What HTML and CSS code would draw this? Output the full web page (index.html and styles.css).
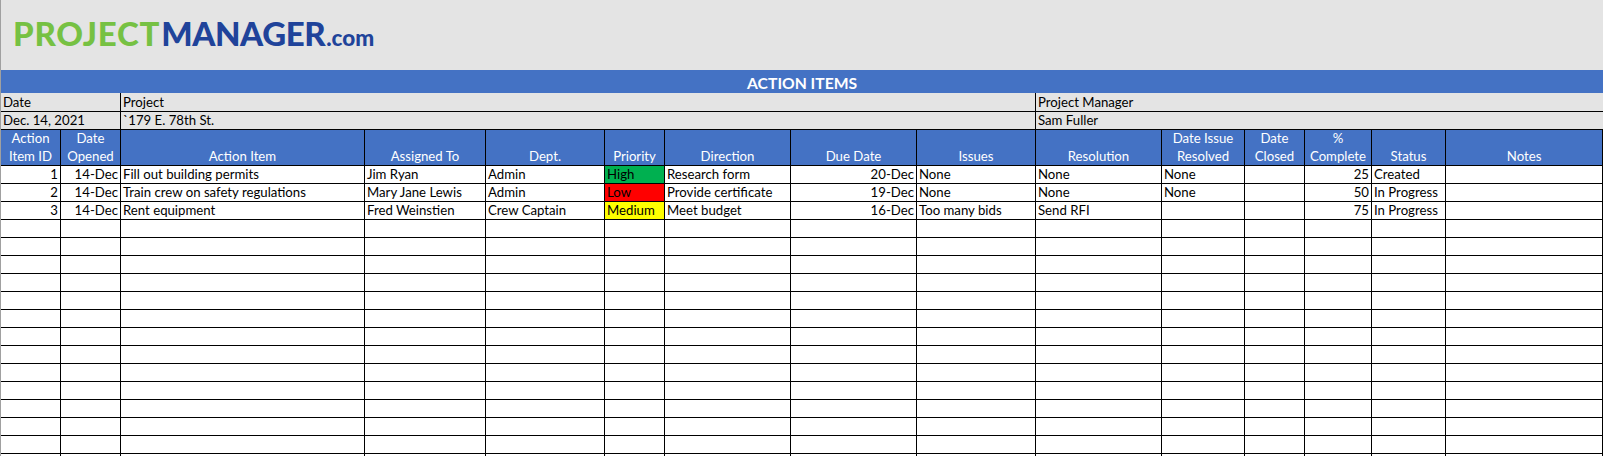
FILE: index.html
```html
<!DOCTYPE html>
<html lang="en">
<head>
<meta charset="utf-8">
<title>Action Items</title>
<link rel="stylesheet" href="styles.css">
</head>
<body>
<div class="sheet">
  <div class="banner">
    <div class="logo"><span class="logo-green">PROJECT</span><span class="logo-blue">MANAGER</span><span class="logo-com">.com</span></div>
  </div>
  <table class="grid">
    <colgroup>
      <col class="c1"><col class="c2"><col class="c3"><col class="c4"><col class="c5"><col class="c6"><col class="c7"><col class="c8"><col class="c9"><col class="c10"><col class="c11"><col class="c12"><col class="c13"><col class="c14"><col class="c15">
    </colgroup>
    <tbody>
      <tr class="title-row"><td colspan="15">ACTION ITEMS</td></tr>
      <tr class="meta first"><td colspan="2">Date</td><td colspan="7">Project</td><td colspan="6" class="open">Project Manager</td></tr>
      <tr class="meta"><td colspan="2">Dec. 14, 2021</td><td colspan="7">`179 E. 78th St.</td><td colspan="6" class="open">Sam Fuller</td></tr>
      <tr class="head">
        <th>Action<br>Item ID</th><th>Date<br>Opened</th><th>Action Item</th><th>Assigned To</th><th>Dept.</th><th>Priority</th><th>Direction</th><th>Due Date</th><th>Issues</th><th>Resolution</th><th>Date Issue<br>Resolved</th><th>Date<br>Closed</th><th>%<br>Complete</th><th>Status</th><th>Notes</th>
      </tr>
      <tr><td class="num">1</td><td class="num">14-Dec</td><td>Fill out building permits</td><td>Jim Ryan</td><td>Admin</td><td class="high">High</td><td>Research form</td><td class="num">20-Dec</td><td>None</td><td>None</td><td>None</td><td></td><td class="num">25</td><td>Created</td><td></td></tr>
      <tr><td class="num">2</td><td class="num">14-Dec</td><td>Train crew on safety regulations</td><td>Mary Jane Lewis</td><td>Admin</td><td class="low">Low</td><td>Provide certificate</td><td class="num">19-Dec</td><td>None</td><td>None</td><td>None</td><td></td><td class="num">50</td><td>In Progress</td><td></td></tr>
      <tr><td class="num">3</td><td class="num">14-Dec</td><td>Rent equipment</td><td>Fred Weinstien</td><td>Crew Captain</td><td class="medium">Medium</td><td>Meet budget</td><td class="num">16-Dec</td><td>Too many bids</td><td>Send RFI</td><td></td><td></td><td class="num">75</td><td>In Progress</td><td></td></tr>
      <tr><td></td><td></td><td></td><td></td><td></td><td></td><td></td><td></td><td></td><td></td><td></td><td></td><td></td><td></td><td></td></tr>
      <tr><td></td><td></td><td></td><td></td><td></td><td></td><td></td><td></td><td></td><td></td><td></td><td></td><td></td><td></td><td></td></tr>
      <tr><td></td><td></td><td></td><td></td><td></td><td></td><td></td><td></td><td></td><td></td><td></td><td></td><td></td><td></td><td></td></tr>
      <tr><td></td><td></td><td></td><td></td><td></td><td></td><td></td><td></td><td></td><td></td><td></td><td></td><td></td><td></td><td></td></tr>
      <tr><td></td><td></td><td></td><td></td><td></td><td></td><td></td><td></td><td></td><td></td><td></td><td></td><td></td><td></td><td></td></tr>
      <tr><td></td><td></td><td></td><td></td><td></td><td></td><td></td><td></td><td></td><td></td><td></td><td></td><td></td><td></td><td></td></tr>
      <tr><td></td><td></td><td></td><td></td><td></td><td></td><td></td><td></td><td></td><td></td><td></td><td></td><td></td><td></td><td></td></tr>
      <tr><td></td><td></td><td></td><td></td><td></td><td></td><td></td><td></td><td></td><td></td><td></td><td></td><td></td><td></td><td></td></tr>
      <tr><td></td><td></td><td></td><td></td><td></td><td></td><td></td><td></td><td></td><td></td><td></td><td></td><td></td><td></td><td></td></tr>
      <tr><td></td><td></td><td></td><td></td><td></td><td></td><td></td><td></td><td></td><td></td><td></td><td></td><td></td><td></td><td></td></tr>
      <tr><td></td><td></td><td></td><td></td><td></td><td></td><td></td><td></td><td></td><td></td><td></td><td></td><td></td><td></td><td></td></tr>
      <tr><td></td><td></td><td></td><td></td><td></td><td></td><td></td><td></td><td></td><td></td><td></td><td></td><td></td><td></td><td></td></tr>
      <tr><td></td><td></td><td></td><td></td><td></td><td></td><td></td><td></td><td></td><td></td><td></td><td></td><td></td><td></td><td></td></tr>
      <tr><td></td><td></td><td></td><td></td><td></td><td></td><td></td><td></td><td></td><td></td><td></td><td></td><td></td><td></td><td></td></tr>
    </tbody>
  </table>
</div>
</body>
</html>
```
FILE: styles.css
```css
html, body {
  margin: 0;
  height: 100%;
  overflow: hidden;
  background: #fff;
}
.sheet {
  width: 1603px;
  height: 456px;
  box-sizing: border-box;
  border-left: 1px solid #a0a0a0;
  overflow: hidden;
  font-family: Lato, "Liberation Sans", sans-serif;
  font-size: 13.2px;
  color: #000;
}
.banner {
  height: 70px;
  box-sizing: border-box;
  background: #e4e4e4;
  padding: 13px 0 0 12px;
}
.logo {
  font-weight: 900;
  font-size: 33px;
  line-height: 40px;
  white-space: nowrap;
}
.logo-green {
  color: #76c143;
  letter-spacing: 0.75px;
  margin-right: 1px;
}
.logo-blue {
  color: #20439a;
  letter-spacing: -0.4px;
}
.logo-com {
  color: #20439a;
  font-size: 22.5px;
  margin-left: 1px;
}
.grid {
  table-layout: fixed;
  border-collapse: separate;
  border-spacing: 0;
  width: 1602px;
}
.c1 { width: 60px; }
.c2 { width: 60px; }
.c3 { width: 244px; }
.c4 { width: 121px; }
.c5 { width: 119px; }
.c6 { width: 60px; }
.c7 { width: 126px; }
.c8 { width: 126px; }
.c9 { width: 119px; }
.c10 { width: 126px; }
.c11 { width: 83px; }
.c12 { width: 60px; }
.c13 { width: 67px; }
.c14 { width: 74px; }
.c15 { width: 157px; }
td, th {
  box-sizing: border-box;
  height: 18px;
  padding: 0 2px;
  line-height: 17px;
  font-weight: 400;
  border-right: 1px solid #000;
  border-bottom: 1px solid #000;
  white-space: nowrap;
  overflow: hidden;
  vertical-align: middle;
  text-align: left;
}
.title-row td {
  height: 23px;
  padding: 4px 0 0;
  background: #4472c4;
  color: #fff;
  font-weight: 700;
  font-size: 15.7px;
  line-height: 19px;
  text-align: center;
  border: 0;
}
.meta td {
  background: #e4e4e4;
}
.meta.first td { height: 19px; }
.meta td.open { border-right: 0; }
.head th {
  height: 36px;
  background: #4472c4;
  color: #fff;
  text-align: center;
  vertical-align: bottom;
  line-height: 17.5px;
}
.num { text-align: right; }
.high { background: #00b050; }
.low { background: #ff0000; }
.medium { background: #ffff00; }
```
